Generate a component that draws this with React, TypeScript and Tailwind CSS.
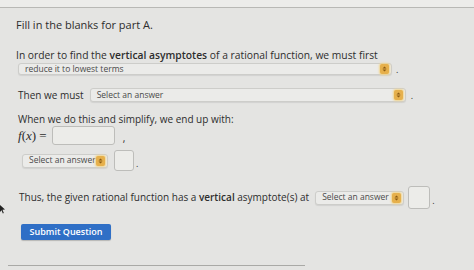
import React from 'react'

function SelectIcon() {
  return (
    <span className="flex h-[10px] w-[9px] flex-col items-center justify-center rounded-[2px] bg-[#e6b04c] shadow-[0_0_2px_1px_#f1d58f]">
      <svg width="5" height="6" viewBox="0 0 5 6">
        <path d="M0.5 2.4 L2.5 0.6 L4.5 2.4 Z" fill="#8a5a12" />
        <path d="M0.5 3.6 L2.5 5.4 L4.5 3.6 Z" fill="#8a5a12" />
      </svg>
    </span>
  )
}

function Dropdown({ label, className }: { label: string; className: string }) {
  return (
    <span
      className={`flex items-center justify-between rounded-[3px] border border-[#cdcdca] bg-[#ebebe9] pl-[6px] pr-[2px] text-[8.5px] text-[#4a4a4a] shadow-[0_1px_1px_rgba(0,0,0,0.08)] ${className}`}
    >
      <span className="leading-none">{label}</span>
      <SelectIcon />
    </span>
  )
}

function Blank({ className }: { className: string }) {
  return <span className={`inline-block rounded-[3px] border border-[#bdbdba] bg-[#ecece9] ${className}`} />
}

export default function App() {
  return (
    <div className="relative h-[270px] w-[474px] overflow-hidden bg-[#e4e4e2] font-['Open_Sans',sans-serif] text-[#2d2d2d]">
      <div className="h-[8px] border-b border-[#b8b8b5] bg-[#ececea]" />

      <div className="pl-[16px]">
        <p className="mt-[10px] h-[14px] text-[11px] leading-[14px]">Fill in the blanks for part A.</p>

        <p className="mt-[16px] h-[14px] text-[10.3px] leading-[14px]">
          In order to find the <span className="font-semibold">vertical asymptotes</span> of a rational function, we must
          first
        </p>
        <div className="mt-[1px] flex items-center pl-[2px]">
          <Dropdown label="reduce it to lowest terms" className="h-[12px] w-[374px]" />
          <span className="ml-[4px] text-[9px] leading-none">.</span>
        </div>

        <div className="mt-[13px] flex h-[14px] items-center pl-[2px] text-[10px]">
          <span>Then we must</span>
          <Dropdown label="Select an answer" className="ml-[6px] h-[14px] w-[316px]" />
          <span className="ml-[5px] text-[9px] leading-none">.</span>
        </div>

        <p className="mt-[10px] h-[14px] pl-[2px] text-[10px] leading-[14px]">
          When we do this and simplify, we end up with:
        </p>

        <div className="flex h-[19px] items-center pl-[2px]">
          <span className="font-['Liberation_Serif',serif] text-[13px]">
            <i>f</i>(<i>x</i>) =
          </span>
          <Blank className="ml-[5px] h-[19px] w-[63px]" />
          <span className="ml-[8px] mt-[6px] text-[10px]">,</span>
        </div>

        <div className="mt-[5px] flex h-[21px] items-center pl-[6px]">
          <Dropdown label="Select an answer" className="h-[14px] w-[86px]" />
          <Blank className="ml-[6px] h-[21px] w-[20px]" />
          <span className="ml-[2px] mt-[6px] text-[9px] leading-none">.</span>
        </div>

        <div className="mt-[15px] flex h-[23px] items-center pl-[3px] text-[10px]">
          <span>
            Thus, the given rational function has a <span className="font-semibold">vertical</span> asymptote(s) at
          </span>
          <Dropdown label="Select an answer" className="ml-[6px] h-[14px] w-[89px]" />
          <Blank className="ml-[4px] h-[23px] w-[22px]" />
          <span className="ml-[2px] mt-[6px] text-[9px] leading-none">.</span>
        </div>

        <button className="ml-[5px] mt-[15px] flex h-[16px] w-[90px] items-center justify-center rounded-[2px] bg-[#2f6fc6] text-[9px] font-semibold text-white shadow-[0_1px_1px_rgba(0,0,0,0.2)]">
          Submit Question
        </button>
      </div>

      <div className="ml-[8px] mt-[25px] h-[1px] w-[297px] bg-[#a9a9a6]" />

      <svg className="absolute left-0 top-[205px]" width="6" height="9" viewBox="0 0 6 9">
        <path d="M0 0 L5 4.5 L2.5 4.8 L3.8 8 L2.8 8.5 L1.6 5.3 L0 7 Z" fill="#222" />
      </svg>
    </div>
  )
}
